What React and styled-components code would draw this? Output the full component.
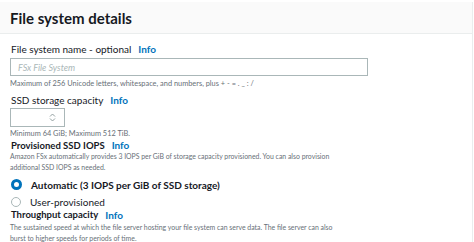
import React from "react";
import styled, { createGlobalStyle } from "styled-components";

const GlobalStyle = createGlobalStyle`
  html, body {
    margin: 0;
    padding: 0;
    background: #ffffff;
  }
  body {
    font-family: "Lato", "Open Sans", sans-serif;
    color: #16191f;
  }
`;

const Panel = styled.section`
  width: 473px;
  height: 240px;
  margin-top: 2px;
  border-right: 1px solid #eaeded;
  box-sizing: border-box;
  overflow: hidden;
  background: #fff;
`;

const Header = styled.header`
  height: 32px;
  display: flex;
  align-items: center;
  padding: 0 10px;
  background: #fafafa;
  border-bottom: 1px solid #eaeded;
  box-sizing: border-box;
  font-size: 15px;
  font-weight: 700;
  color: #16191f;
`;

const Body = styled.div`
  display: flex;
  flex-direction: column;
  padding: 9px 10px 0 10px;
`;

const Field = styled.div`
  display: flex;
  flex-direction: column;
  margin-bottom: ${(p) => p.$gap || 0}px;
`;

const Label = styled.div`
  display: flex;
  align-items: center;
  gap: 7px;
  height: 12px;
  padding-left: 1px;
  font-size: ${(p) => (p.$strong ? 9.5 : 10)}px;
  color: #16191f;
  font-weight: ${(p) => (p.$strong ? 700 : 400)};
`;

const Info = styled.span`
  color: #0073bb;
  font-weight: 700;
  font-size: 10px;
`;

const TextInput = styled.div`
  width: 358px;
  height: 18px;
  margin-top: 3px;
  display: flex;
  align-items: center;
  padding: 0 7px;
  box-sizing: border-box;
  border: 1px solid #aab7b8;
  font-size: 9px;
  font-style: italic;
  color: #aab7b8;
`;

const NumberInput = styled.div`
  width: 55px;
  height: 19px;
  margin-top: 2px;
  display: flex;
  align-items: center;
  justify-content: flex-end;
  padding-right: 8px;
  box-sizing: border-box;
  border: 1px solid #aab7b8;
`;

const Hint = styled.div`
  font-size: 7.4px;
  line-height: 10px;
  color: #687078;
  margin-top: ${(p) => p.$top || 0}px;
`;

const Description = styled.div`
  font-size: 6.9px;
  line-height: 11px;
  color: #687078;
  margin-top: ${(p) => p.$top || 0}px;
`;

const Radio = styled.label`
  display: flex;
  align-items: center;
  gap: 9px;
  height: 14px;
  margin-bottom: ${(p) => p.$gap || 0}px;
  padding-left: 1px;
  font-size: 10px;
  color: #16191f;
  font-weight: ${(p) => (p.$checked ? 700 : 400)};
`;

const Dot = styled.span`
  width: ${(p) => (p.$checked ? 5 : 8)}px;
  height: ${(p) => (p.$checked ? 5 : 8)}px;
  border-radius: 50%;
  border: ${(p) => (p.$checked ? "3px solid #0073bb" : "1px solid #aab7b8")};
  background: #fff;
`;

const Spinner = () => (
  <svg width="7" height="9" viewBox="0 0 7 9">
    <path d="M1 3.5 L3.5 1 L6 3.5" fill="none" stroke="#879596" strokeWidth="0.9" />
    <path d="M1 5.5 L3.5 8 L6 5.5" fill="none" stroke="#879596" strokeWidth="0.9" />
  </svg>
);

export default function App() {
  return (
    <>
      <GlobalStyle />
      <Panel>
        <Header>File system details</Header>
        <Body>
          <Field $gap={5}>
            <Label>
              File system name - optional <Info>Info</Info>
            </Label>
            <TextInput>FSx File System</TextInput>
            <Hint $top={3}>
              Maximum of 256 Unicode letters, whitespace, and numbers, plus + - = . _ : /
            </Hint>
          </Field>
          <Field>
            <Label>
              SSD storage capacity <Info>Info</Info>
            </Label>
            <NumberInput>
              <Spinner />
            </NumberInput>
            <Hint $top={2}>Minimum 64 GiB; Maximum 512 TiB.</Hint>
          </Field>
          <Field $gap={4.5}>
            <Label $strong>
              Provisioned SSD IOPS <Info>Info</Info>
            </Label>
            <Description>
              Amazon FSx automatically provides 3 IOPS per GiB of storage capacity provisioned. You can also provision
              <br />
              additional SSD IOPS as needed.
            </Description>
          </Field>
          <Radio $checked $gap={3}>
            <Dot $checked />
            Automatic (3 IOPS per GiB of SSD storage)
          </Radio>
          <Radio>
            <Dot />
            User-provisioned
          </Radio>
          <Field>
            <Label $strong>
              Throughput capacity <Info>Info</Info>
            </Label>
            <Description $top={1.5}>
              The sustained speed at which the file server hosting your file system can serve data. The file server can also
              <br />
              burst to higher speeds for periods of time.
            </Description>
          </Field>
        </Body>
      </Panel>
    </>
  );
}
